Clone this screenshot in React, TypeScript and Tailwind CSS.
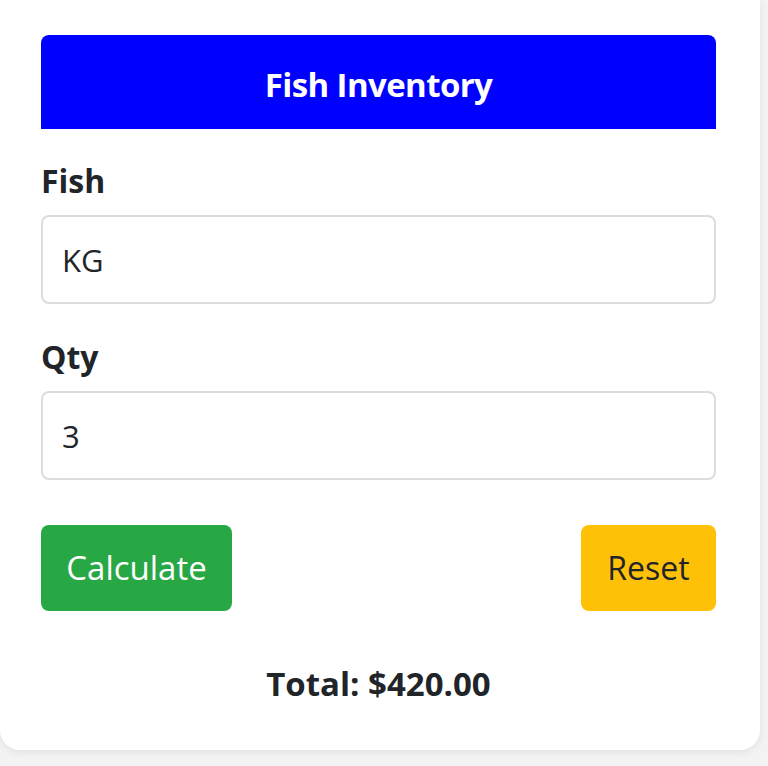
import { useState } from "react"

const PRICE = 140

const App = () => {
  const [fish, setFish] = useState("KG")
  const [qty, setQty] = useState("3")
  const [total, setTotal] = useState(420)

  const handleCalculate = () => {
    setTotal((parseFloat(qty) || 0) * PRICE)
  }

  const handleReset = () => {
    setFish("")
    setQty("")
    setTotal(0)
  }

  return (
    <div
      className="min-h-[766px] w-full bg-[#f3f3f3] text-[#212529]"
      style={{ fontFamily: '"Open Sans", "Noto Sans", Arial, sans-serif' }}
    >
      <div className="flex w-[760px] flex-col rounded-b-[20px] bg-white pt-[35px] pb-[47px] pl-[41px] pr-[44px] shadow-[0_2px_8px_rgba(0,0,0,0.08)]">
        <div className="flex h-[94px] items-center justify-center rounded-t-[8px] bg-[#0000ff] pt-[5px]">
          <h1 className="text-[33px] font-bold leading-none tracking-[-0.6px] text-white">Fish Inventory</h1>
        </div>

        <label className="mt-[33px] mb-[15px] text-[32px] font-bold leading-[38px]">Fish</label>
        <input
          className="h-[89px] w-full rounded-[8px] border-2 border-[#dcdcdc] px-[19px] text-[31px] text-[#212529] outline-none"
          value={fish}
          onChange={(e) => setFish(e.target.value)}
        />

        <label className="mt-[34px] mb-[15px] text-[32px] font-bold leading-[38px]">Qty</label>
        <input
          className="h-[89px] w-full rounded-[8px] border-2 border-[#dcdcdc] px-[19px] text-[31px] text-[#212529] outline-none"
          value={qty}
          onChange={(e) => setQty(e.target.value)}
        />

        <div className="mt-[45px] flex items-center justify-between">
          <button
            className="h-[86px] w-[191px] rounded-[8px] bg-[#28a745] text-[33px] text-white"
            onClick={handleCalculate}
          >
            Calculate
          </button>
          <button
            className="h-[86px] w-[135px] rounded-[8px] bg-[#ffc107] text-[32px] text-[#212529]"
            onClick={handleReset}
          >
            Reset
          </button>
        </div>

        <div className="mt-[54px] text-center text-[33px] font-bold leading-[38px]">
          Total: ${total.toFixed(2)}
        </div>
      </div>
    </div>
  )
}

export default App
